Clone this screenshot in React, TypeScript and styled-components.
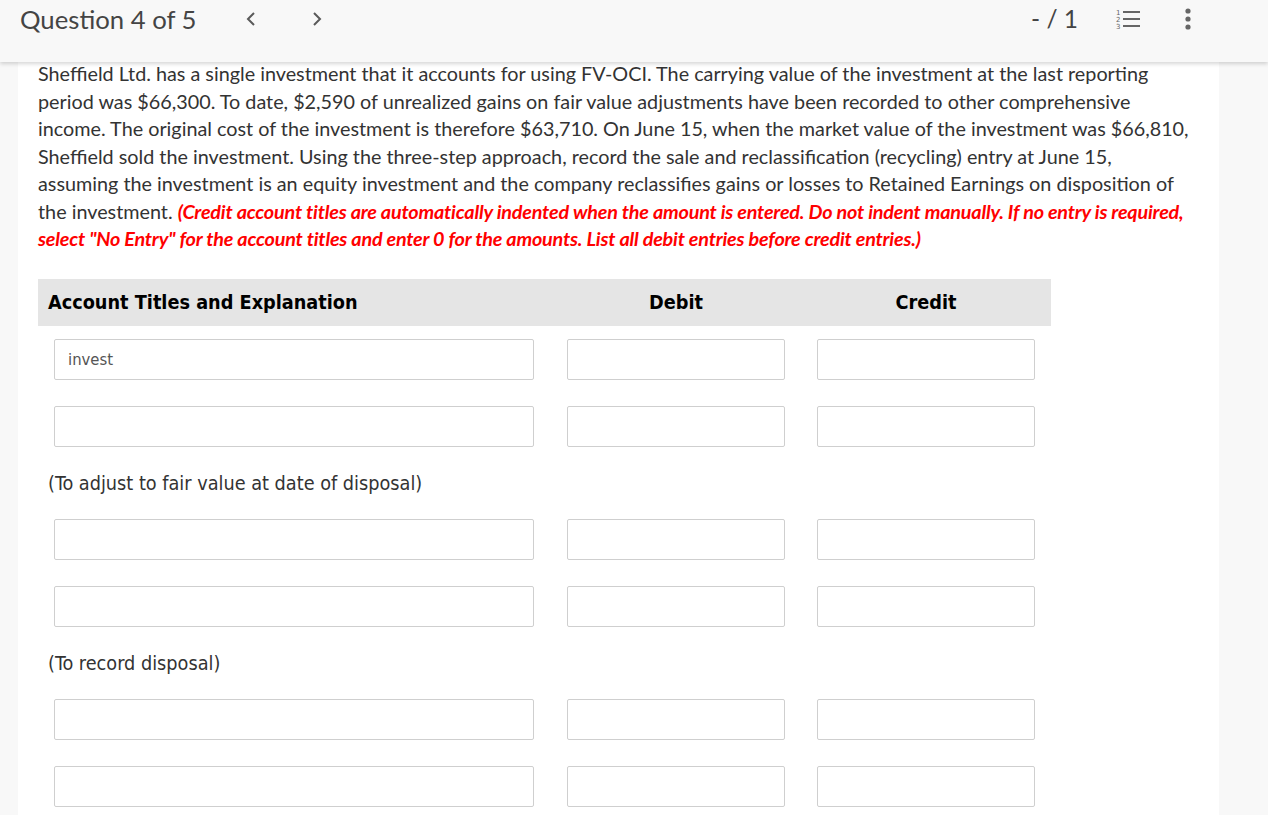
import React from 'react';
import styled, { createGlobalStyle } from 'styled-components';

const GlobalStyle = createGlobalStyle`
  html, body {
    margin: 0;
    padding: 0;
    background: #f8f8f8;
    font-family: Lato, "Open Sans", sans-serif;
  }
`;

const Page = styled.div`
  width: 1268px;
  height: 815px;
  overflow: hidden;
  display: flex;
  flex-direction: column;
  background: #f8f8f8;
`;

const TopBar = styled.header`
  height: 62px;
  flex: none;
  display: flex;
  align-items: flex-start;
  padding: 0 0 0 20px;
  background: #f8f8f8;
  box-shadow: 0 2px 4px rgba(0, 0, 0, 0.16);
  position: relative;
  z-index: 2;
`;

const Title = styled.div`
  font-size: 25.7px;
  color: #444;
  line-height: 38px;
  width: 221px;
`;

const NavBtn = styled.button`
  border: none;
  background: none;
  padding: 0;
  width: 20px;
  height: 38px;
  display: flex;
  align-items: center;
  justify-content: center;
  margin-right: 46px;
  color: #555;
`;

const Spacer = styled.div`
  flex: 1;
`;

const Score = styled.div`
  font-size: 24.5px;
  color: #444;
  line-height: 38px;
  margin-right: 38px;
`;

const IconBtn = styled.button<{ $mr: number }>`
  border: none;
  background: none;
  padding: 0;
  height: 38px;
  display: flex;
  align-items: center;
  justify-content: center;
  margin-right: ${p => p.$mr}px;
`;

const Body = styled.div`
  flex: 1;
  display: flex;
  overflow: hidden;
`;

const Panel = styled.main`
  margin-left: 18px;
  width: 1201px;
  background: #fff;
  padding: 0 20px;
  box-sizing: border-box;
`;

const Prompt = styled.p`
  margin: -2px 0 0;
  font-size: 19.8px;
  line-height: 27.5px;
  color: #333;
  white-space: nowrap;
`;

const Warn = styled.span`
  color: #f00;
  font-weight: 700;
  font-style: italic;
  letter-spacing: -0.2px;
`;

const Table = styled.div`
  margin-top: 26.5px;
  width: 1013px;
`;

const HeadRow = styled.div`
  display: grid;
  grid-template-columns: 513px 250px 250px;
  height: 47px;
  align-items: center;
  background: #e5e5e5;
  font-family: "DejaVu Sans Condensed", "DejaVu Sans", sans-serif;
  font-weight: 700;
  font-size: 19.7px;
  color: #000;
`;

const HeadCell = styled.div<{ $center?: boolean }>`
  padding-left: ${p => (p.$center ? 0 : 10)}px;
  text-align: ${p => (p.$center ? 'center' : 'left')};
`;

const EntryRow = styled.div`
  display: grid;
  grid-template-columns: 513px 250px 250px;
  padding-top: 13px;
  height: 67px;
  box-sizing: border-box;
`;

const Cell = styled.div`
  padding-left: 16px;
`;

const Field = styled.input<{ $w: number }>`
  width: ${p => p.$w}px;
  height: 41px;
  box-sizing: border-box;
  border: 1px solid #cfcfcf;
  border-radius: 2px;
  padding: 0 13px;
  font-family: "DejaVu Sans Condensed", "DejaVu Sans", sans-serif;
  font-size: 16.5px;
  color: #555;
  background: #fff;
  outline: none;
`;

const Note = styled.div`
  font-family: "DejaVu Sans Condensed", "DejaVu Sans", sans-serif;
  font-size: 19.7px;
  color: #333;
  padding-left: 10px;
  height: 46px;
  display: flex;
  align-items: center;
`;

const Chevron = ({ dir }: { dir: 'l' | 'r' }) => (
  <svg width="10" height="16" viewBox="0 0 10 16">
    <path
      d={dir === 'l' ? 'M8 2 L2 8 L8 14' : 'M2 2 L8 8 L2 14'}
      fill="none"
      stroke="#5a5a5a"
      strokeWidth="2"
    />
  </svg>
);

const ListIcon = () => (
  <svg width="26" height="22" viewBox="0 0 26 22">
    <text x="0" y="6.5" fontSize="7" fontFamily="DejaVu Sans" fill="#666">1</text>
    <text x="0" y="13.5" fontSize="7" fontFamily="DejaVu Sans" fill="#666">2</text>
    <text x="0" y="20.5" fontSize="7" fontFamily="DejaVu Sans" fill="#666">3</text>
    <rect x="7" y="3" width="17" height="2" fill="#666" />
    <rect x="7" y="10" width="17" height="2" fill="#666" />
    <rect x="7" y="17" width="17" height="2" fill="#666" />
  </svg>
);

const Kebab = () => (
  <svg width="8" height="24" viewBox="0 0 8 24">
    <circle cx="4" cy="4" r="2.6" fill="#666" />
    <circle cx="4" cy="12" r="2.6" fill="#666" />
    <circle cx="4" cy="20" r="2.6" fill="#666" />
  </svg>
);

const rows: (string | { note: string })[] = [
  'invest',
  '',
  { note: '(To adjust to fair value at date of disposal)' },
  '',
  '',
  { note: '(To record disposal)' },
  '',
  '',
];

export default function App() {
  return (
    <Page>
      <GlobalStyle />
      <TopBar>
        <Title>Question 4 of 5</Title>
        <NavBtn aria-label="previous"><Chevron dir="l" /></NavBtn>
        <NavBtn aria-label="next"><Chevron dir="r" /></NavBtn>
        <Spacer />
        <Score>- / 1</Score>
        <IconBtn $mr={42} aria-label="list"><ListIcon /></IconBtn>
        <IconBtn $mr={76} aria-label="more"><Kebab /></IconBtn>
      </TopBar>
      <Body>
        <Panel>
          <Prompt>
            Sheffield Ltd. has a single investment that it accounts for using FV-OCI. The carrying value of the investment at the last reporting<br />
            period was $66,300. To date, $2,590 of unrealized gains on fair value adjustments have been recorded to other comprehensive<br />
            income. The original cost of the investment is therefore $63,710. On June 15, when the market value of the investment was $66,810,<br />
            Sheffield sold the investment. Using the three-step approach, record the sale and reclassification (recycling) entry at June 15,<br />
            assuming the investment is an equity investment and the company reclassifies gains or losses to Retained Earnings on disposition of<br />
            the investment.{' '}
            <Warn>
              (Credit account titles are automatically indented when the amount is entered. Do not indent manually. If no entry is required,<br />
              select "No Entry" for the account titles and enter 0 for the amounts. List all debit entries before credit entries.)
            </Warn>
          </Prompt>
          <Table>
            <HeadRow>
              <HeadCell>Account Titles and Explanation</HeadCell>
              <HeadCell $center>Debit</HeadCell>
              <HeadCell $center>Credit</HeadCell>
            </HeadRow>
            {rows.map((r, i) =>
              typeof r === 'string' ? (
                <EntryRow key={i}>
                  <Cell><Field $w={480} defaultValue={r} /></Cell>
                  <Cell><Field $w={218} /></Cell>
                  <Cell><Field $w={218} /></Cell>
                </EntryRow>
              ) : (
                <Note key={i}>{r.note}</Note>
              )
            )}
          </Table>
        </Panel>
      </Body>
    </Page>
  );
}
